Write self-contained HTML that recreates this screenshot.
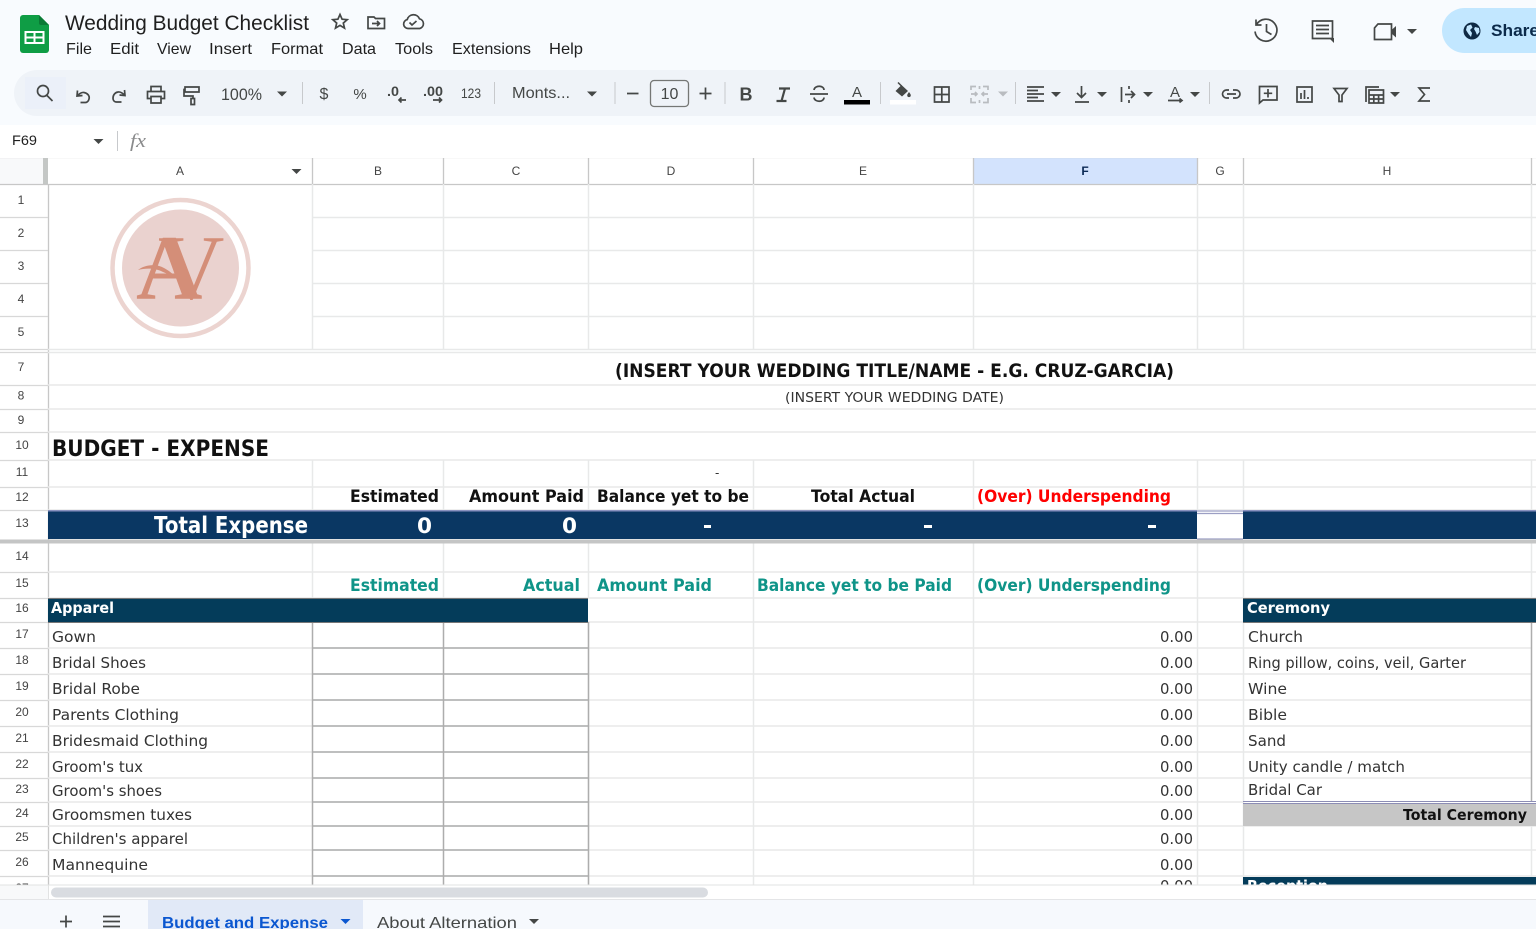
<!DOCTYPE html>
<html><head><meta charset="utf-8"><title>Wedding Budget Checklist</title>
<style>
html,body{margin:0;padding:0;width:1536px;height:929px;overflow:hidden;background:#fff}
svg{display:block}
.ui{font-family:"Liberation Sans",sans-serif;fill:#1f1f1f}
.m{font-family:"DejaVu Sans",sans-serif;font-size:15px;fill:#333}
.b{font-family:"DejaVu Sans",sans-serif;font-weight:bold;font-size:17px;fill:#111}
.h{font-family:"Liberation Sans",sans-serif;font-size:12px;fill:#444;text-anchor:middle}
.ic{fill:none;stroke:#444746;stroke-width:1.7}
.car{fill:#444746;stroke:none}
.sep{stroke:#c7c9cc;stroke-width:1}
.g{stroke:#e8e9e9;stroke-width:1.5}
.d{stroke:#adadad;stroke-width:1.5}
</style></head><body>
<svg width="1536" height="929" viewBox="0 0 1536 929" xmlns="http://www.w3.org/2000/svg">
<defs><clipPath id="gc"><rect x="0" y="158" width="1536" height="727"/></clipPath></defs>
<rect width="1536" height="125" fill="#f8fbfe"/>
<rect x="14" y="70" width="1560" height="46" rx="23" fill="#eff3f8"/>
<rect x="25" y="77" width="41" height="32" fill="#ebf0f9"/>

<!-- Logo -->
<path d="M20 18a3 3 0 0 1 3-3h16l10 10v25a3 3 0 0 1-3 3H23a3 3 0 0 1-3-3z" fill="#0f9d45"/>
<path d="M39 15l10 10H41a2 2 0 0 1-2-2z" fill="#0a7a35"/>
<path d="M25.500 32h18v11h-18zM25.500 37.500h18M34.500 32v11" fill="none" stroke="#fff" stroke-width="2"/>

<text class="ui" x="65" y="30" font-size="21" textLength="244" lengthAdjust="spacingAndGlyphs">Wedding Budget Checklist</text>
<path class="ic" stroke-width="1.500" d="M340 14.500l2.100 4.700 5.100.5-3.900 3.400 1.200 5-4.500-2.700-4.500 2.700 1.200-5-3.900-3.400 5.100-.5z"/>
<path class="ic" d="M368 17h6l1.500 1.500h9v10h-16.500zM372 23.500h7M377 21l2.500 2.500-2.500 2.500"/>
<path class="ic" stroke-width="1.200" d="M408 28.500a4.500 4.500 0 0 1-.8-8.900 6.500 6.500 0 0 1 12.300-.8 5 5 0 0 1 .3 9.700zM409.500 22.500l2.500 2.500 4.500-4"/>
<g class="ui" font-size="16">
<text x="66" y="54" textLength="26" lengthAdjust="spacingAndGlyphs">File</text>
<text x="110" y="54" textLength="29" lengthAdjust="spacingAndGlyphs">Edit</text>
<text x="157" y="54" textLength="34" lengthAdjust="spacingAndGlyphs">View</text>
<text x="209" y="54" textLength="43" lengthAdjust="spacingAndGlyphs">Insert</text>
<text x="271" y="54" textLength="52" lengthAdjust="spacingAndGlyphs">Format</text>
<text x="342" y="54" textLength="34" lengthAdjust="spacingAndGlyphs">Data</text>
<text x="395" y="54" textLength="38" lengthAdjust="spacingAndGlyphs">Tools</text>
<text x="452" y="54" textLength="79" lengthAdjust="spacingAndGlyphs">Extensions</text>
<text x="549" y="54" textLength="34" lengthAdjust="spacingAndGlyphs">Help</text>
</g>

<!-- top right -->
<path class="ic" stroke-width="2.400" d="M1256.500 24.500a11 11 0 1 1-1.500 7M1256 19.500v5.500h5.500M1266.500 24v7.500l5 3"/>
<path class="ic" stroke-width="2.500" d="M1312.500 21h20v17.500h-20zM1316 25.500h13M1316 29.500h13M1316 33.500h13"/>
<path d="M1329 38l5 5V38z" fill="#444746"/>
<path class="ic" stroke-width="2.300" d="M1378 24h13.500v15.500h-17v-11.500z"/>
<path d="M1391.500 30l4.500-4v11.500l-4.500-4z" fill="#444746"/>
<path class="car" d="M1407 29h10l-5 5z"/>
<rect x="1442" y="8" width="150" height="45" rx="22.500" fill="#c2e7ff"/>
<circle cx="1472" cy="31" r="8.500" fill="#0f2a44"/>
<path d="M1467 26l4-1.500 1.500 3-2.500 2.500 2 3-1 4-2.500-3-2.500-4zM1475 27l4 1 .5 4-2.500 3-1.500-3.500-1.500-2.500z" fill="#c2e7ff"/>
<text class="ui" x="1491" y="36" font-size="17" font-weight="bold" style="fill:#0b2a4a" textLength="48" lengthAdjust="spacingAndGlyphs">Share</text>

<!-- toolbar left -->
<circle class="ic" cx="43" cy="91" r="5.500" stroke-width="2"/><path class="ic" stroke-width="2.200" d="M47 95.500l5.500 5.500"/>
<path class="ic" d="M77.500 90.500l-.5 5.500 5.500-.5M77.500 95.500c2-2 4-3.500 6.500-3 3 .5 6 3 5 6.500-.5 2-2 3.500-3.500 3.500h-5"/>
<path class="ic" d="M124.500 90l.5 5.500-5.500-.5M124.500 95c-2-2-4-3.500-6.500-3-3 .5-5 3-5 6s2 4 3.500 4h5"/>
<path class="ic" stroke-width="2" d="M151 92v-5.500h10v5.500M151 98.500h-3.500v-7h17v7H161M151 96.500h10v6.500h-10z"/>
<path class="ic" stroke-width="2" d="M185 87h14v5h-14zM185 89.500h-1v6.500h9v2.500M191 98.500h3.500v6h-3.500z"/>
<text class="ui" x="221" y="100" font-size="17" style="fill:#444746" textLength="41" lengthAdjust="spacingAndGlyphs">100%</text>
<path class="car" d="M277 91.500h10l-5 5z"/>
<path class="sep" d="M302.500 82v22M494.500 82v22M615 82v22M725 82v22M880.500 82v22M1015.500 82v22M1209.500 82v22"/>
<text class="ui" x="324" y="99" font-size="16" text-anchor="middle" style="fill:#444746">$</text>
<text class="ui" x="360" y="99" font-size="15" text-anchor="middle" style="fill:#444746">%</text>
<text class="ui" x="387" y="96" font-size="14" font-weight="bold" style="fill:#444746" textLength="12" lengthAdjust="spacingAndGlyphs">.0</text>
<path class="ic" d="M406 100h-7M401.500 97.500l-2.500 2.500 2.500 2.500"/>
<text class="ui" x="423" y="96" font-size="14" font-weight="bold" style="fill:#444746" textLength="20" lengthAdjust="spacingAndGlyphs">.00</text>
<path class="ic" d="M433 100h8M439 97.500l2.500 2.500-2.500 2.500"/>
<text class="ui" x="461" y="98" font-size="14" style="fill:#444746" textLength="20" lengthAdjust="spacingAndGlyphs">123</text>
<text class="ui" x="512" y="98" font-size="16" style="fill:#444746" textLength="58" lengthAdjust="spacingAndGlyphs">Monts...</text>
<path class="car" d="M587 91.500h10l-5 5z"/>
<path class="ic" stroke-width="2" d="M627 93.500h11.500M699.500 93.500h12M705.500 87.500v12"/>
<rect x="650.500" y="80.500" width="38" height="26" rx="3.500" fill="none" stroke="#757775" stroke-width="1.300"/>
<text class="ui" x="669.500" y="99" font-size="16" text-anchor="middle" style="fill:#444746">10</text>
<text class="ui" x="746" y="100.500" font-size="18" font-weight="bold" text-anchor="middle" style="fill:#444746">B</text>
<path fill="none" stroke="#444746" stroke-width="2.200" d="M779 88.500h11M776.500 101h10M785 88.500l-3.500 12.500"/>
<path class="ic" d="M810 94h18M814 90c.5-5 10-5 10 0M814 97.500c.5 5 10 5 10 0"/>
<text class="ui" x="857" y="97" font-size="15" text-anchor="middle" style="fill:#444746">A</text>
<rect x="844" y="100" width="26" height="4.500" fill="#000"/>
<path d="M901.500 85l6.500 6-6 5.500-6.500-5.500z M909 92c.8 1.300 1.800 2.300 1.800 3.300a1.800 1.800 0 0 1-3.600 0c0-1 1-2 1.800-3.300z" fill="#444746"/>
<path d="M898 82.500l3.500 3.500" stroke="#444746" stroke-width="1.500"/>
<rect x="890" y="100" width="26" height="4.500" fill="#fff"/>
<path class="ic" stroke-width="1.900" d="M934.500 87h14.500v15h-14.500zM941.800 87v15M934.500 94.500h14.500"/>
<path fill="none" stroke="#b9bcc0" stroke-width="1.700" d="M971 90v-3.500h5M971 98v4.500h5M988 90v-3.500h-5M988 98v4.500h-5M971 94h6M975 92l2 2-2 2M988 94h-6M984 92l-2 2 2 2M979.500 86v3M979.500 100v3"/>
<path d="M998 91.500h10l-5 5z" fill="#b9bcc0"/>
<!-- toolbar right -->
<path class="ic" stroke-width="1.600" d="M1027 87h17M1027 90.500h11M1027 94h17M1027 97.500h11M1027 101h17"/>
<path class="car" d="M1051 92h10l-5 5z"/>
<path class="ic" stroke-width="1.900" d="M1081.500 86v11M1077 93l4.500 4.500 4.500-4.500M1075 102h14"/>
<path class="car" d="M1097 92h10l-5 5z"/>
<path class="ic" stroke-width="1.800" d="M1121.500 87v15M1125 94.500h9.500M1131 91l3.500 3.500-3.500 3.500M1129 86v3M1129 100v3"/>
<path class="car" d="M1143 92h10l-5 5z"/>
<text class="ui" x="1175" y="97" font-size="15" text-anchor="middle" style="fill:#444746">A</text>
<path class="ic" stroke-width="1.500" d="M1168 100.500h14M1179.500 98.500l2.500 2-2.500 2"/>
<path class="car" d="M1190 92h10l-5 5z"/>
<path class="ic" stroke-width="1.900" d="M1229 90h-2.500a4 4 0 0 0 0 8h2.500M1233 90h3a4 4 0 0 1 0 8H1233M1227 94h9"/>
<path class="ic" stroke-width="1.900" d="M1259.500 86.500h17.500v13.500h-14l-3.500 3zM1268 89v8.500M1263.800 93.300h8.400"/>
<path class="ic" stroke-width="1.700" d="M1297 87h15v15h-15zM1301 93v6M1304.500 90v9M1308 97v2"/>
<path class="ic" stroke-width="2" d="M1334 88.500h13l-5 6.500v6.500h-3V95z"/>
<path class="ic" stroke-width="1.800" d="M1366 102v-15h13M1369 90h14.500v13H1369zM1369 95h14.500M1369 99h14.500M1373.800 95v8M1378.600 95v8"/>
<path class="car" d="M1390 92h10l-5 5z"/>
<path class="ic" stroke-width="2.400" d="M1430 88h-11l5.500 6.500-5.500 6.500h11"/>

<!-- formula bar -->
<text class="ui" x="12" y="145" font-size="14" textLength="25" lengthAdjust="spacingAndGlyphs">F69</text>
<path class="car" d="M93.500 139h10l-5 5z"/>
<path class="sep" d="M117.500 131v20" stroke="#d8d8d8"/>
<text x="130" y="147" font-size="19" font-style="italic" font-family="Liberation Serif,serif" fill="#8a8b8c" textLength="16" lengthAdjust="spacingAndGlyphs">fx</text>

<!-- sheet -->
<g clip-path="url(#gc)">
<rect x="0" y="158" width="1536" height="26" fill="#fff"/>
<rect x="0" y="158" width="44" height="26" fill="#f8f9fa"/>
<rect x="43" y="158" width="5" height="26" fill="#c4c7c5"/>
<rect x="973" y="158" width="224" height="26" fill="#d3e3fd"/>
<path stroke="#c7c7c7" stroke-width="1.300" d="M0 157.500H1536M0 184.500H1536M312.500 158v26M443.500 158v26M588.500 158v26M753.500 158v26M973.500 158v26M1197.500 158v26M1243.500 158v26M1531.500 158v26M48.500 184V885"/>
<!-- rows in header -->
<path stroke="#d8d8d8" stroke-width="1.200" d="M0 217.500h48M0 250.500h48M0 283.500h48M0 316.500h48M0 349.500h48M0 352.500h48M0 385.500h48M0 409.500h48M0 432.500h48M0 460.500h48M0 487.500h48M0 510.500h48M0 572.500h48M0 598.500h48M0 622.500h48M0 648.500h48M0 674.500h48M0 700.500h48M0 726.500h48M0 752.500h48M0 778.500h48M0 802.500h48M0 826.500h48M0 850.500h48M0 876.500h48"/>
<!-- grid -->
<path class="g" d="M312 217.500H1536M312 250.500H1536M312 283.500H1536M312 316.500H1536M48 349.500H1536M48 352.500H1536M48 385H1536M48 409H1536M48 432H1536M48 460H1536M48 487H1536M48 510H1536M48 572H1536M48 598H1536M588 622H1243M48 648H1531M48 674H1531M48 700H1531M48 726H1531M48 752H1531M48 778H1531M48 802H1243M48 826H1536M48 850H1536M48 876H1536"/>
<path class="g" d="M312.500 184V349M443.500 184V349M588.500 184V349M753.500 184V349M973.500 184V349M1197.500 184V349M1243.500 184V349M1531.500 184V349M312.500 460V510M443.500 460V510M588.500 460V510M753.500 460V510M973.500 460V510M1197.500 460V510M1243.500 460V510M1531.500 460V510M312.500 543V598M443.500 543V598M588.500 543V598M753.500 543V598M973.500 543V598M1197.500 543V598M1243.500 543V598M1531.500 543V598M753.500 598V885M973.500 598V885M1197.500 598V885M1243.500 598V885M588.500 622V885M1531.500 826V885"/>
<path class="d" d="M312 648H588M312 674H588M312 700H588M312 726H588M312 752H588M312 778H588M312 802H588M312 826H588M312 850H588M312 876H588M312.500 622V885M443.500 622V885M588.500 622V885M1531.500 622V802"/>
<!-- row 13 band -->
<rect x="48" y="510" width="1149" height="29" fill="#0a3763"/>
<rect x="1243" y="510" width="293" height="29" fill="#0a3763"/>
<rect x="48" y="510" width="1488" height="1.500" fill="#8a92c0"/>
<rect x="1197" y="510" width="46" height="29" fill="#fff"/>
<path stroke="#9c9fc4" stroke-width="1.200" d="M1197 511h46M1197 513.500h46M1197 539h46"/>
<rect x="0" y="539.500" width="1536" height="4" fill="#c4c5c5"/>
<!-- row 16 -->
<rect x="48" y="598" width="540" height="24" fill="#043c5a"/>
<rect x="1243" y="598" width="293" height="24" fill="#043c5a"/>
<path stroke="#777" d="M48 598.500h540M1243 598.500h293M48 622.500h540M1243 622.500h293"/>
<!-- total ceremony -->
<rect x="1243" y="803" width="293" height="23" fill="#c6c6c6"/>
<path stroke="#8c8db5" stroke-width="1" d="M1243 801.500h293M1243 803.500h293"/>
<rect x="1243" y="877" width="293" height="10" fill="#043c5a"/>

<!-- column letters -->
<text class="h" x="180" y="175">A</text><path class="car" d="M291.500 169h10l-5 5z"/>
<text class="h" x="378" y="175">B</text><text class="h" x="516" y="175">C</text><text class="h" x="671" y="175">D</text><text class="h" x="863" y="175">E</text><text class="h" x="1085" y="175" style="font-weight:bold;fill:#0b2a55">F</text><text class="h" x="1220" y="175">G</text><text class="h" x="1387" y="175">H</text>
<!-- row numbers -->
<text class="h" x="21" y="204">1</text><text class="h" x="21" y="237">2</text><text class="h" x="21" y="270">3</text><text class="h" x="21" y="303">4</text><text class="h" x="21" y="336">5</text><text class="h" x="21" y="371">7</text><text class="h" x="21" y="399.500">8</text><text class="h" x="21" y="424">9</text><text class="h" x="22" y="449">10</text><text class="h" x="22" y="476">11</text><text class="h" x="22" y="501">12</text><text class="h" x="22" y="527">13</text><text class="h" x="22" y="560">14</text><text class="h" x="22" y="587">15</text><text class="h" x="22" y="612">16</text><text class="h" x="22" y="638">17</text><text class="h" x="22" y="664">18</text><text class="h" x="22" y="690">19</text><text class="h" x="22" y="716">20</text><text class="h" x="22" y="742">21</text><text class="h" x="22" y="768">22</text><text class="h" x="22" y="793">23</text><text class="h" x="22" y="817">24</text><text class="h" x="22" y="841">25</text><text class="h" x="22" y="866">26</text><text class="h" x="22" y="892">27</text>

<!-- logo image -->
<circle cx="180.500" cy="268" r="68" fill="none" stroke="#ecd4d0" stroke-width="4.500"/>
<circle cx="180.500" cy="268" r="58.500" fill="#ead2cf"/>
<text x="136" y="298.500" font-family="Liberation Serif,serif" font-weight="bold" font-size="92" fill="#d48e78">A</text>
<text x="158" y="298.500" font-family="Liberation Serif,serif" font-size="92" fill="#d48e78">V</text>
<path d="M138 270c6-5 18-7 26-2 4 2 9 6 12 9-5-1-8-3-13-5-8-4-17-4-25-2z" fill="#d48e78"/>

<!-- titles -->
<text class="b" x="615" y="377" style="font-size:19px" textLength="559" lengthAdjust="spacingAndGlyphs">(INSERT YOUR WEDDING TITLE/NAME - E.G. CRUZ-GARCIA)</text>
<text class="m" x="785" y="402" style="font-size:13px" textLength="219" lengthAdjust="spacingAndGlyphs">(INSERT YOUR WEDDING DATE)</text>
<text class="b" x="52" y="456" style="font-size:22px" textLength="217" lengthAdjust="spacingAndGlyphs">BUDGET - EXPENSE</text>
<text class="m" x="715" y="477" style="font-size:12px">-</text>
<g>
<text class="b" x="350" y="502" textLength="89" lengthAdjust="spacingAndGlyphs">Estimated</text>
<text class="b" x="469" y="502" textLength="115" lengthAdjust="spacingAndGlyphs">Amount Paid</text>
<text class="b" x="597" y="502" textLength="152" lengthAdjust="spacingAndGlyphs">Balance yet to be</text>
<text class="b" x="811" y="502" textLength="104" lengthAdjust="spacingAndGlyphs">Total Actual</text>
<text class="b" x="977" y="502" style="fill:#ff0000" textLength="194" lengthAdjust="spacingAndGlyphs">(Over) Underspending</text>
</g>
<g>
<text class="b" x="154" y="533" style="font-size:23px;fill:#fff" textLength="154" lengthAdjust="spacingAndGlyphs">Total Expense</text>
<text class="b" x="417" y="533" style="font-size:21px;fill:#fff" textLength="15" lengthAdjust="spacingAndGlyphs">0</text>
<text class="b" x="562" y="533" style="font-size:21px;fill:#fff" textLength="15" lengthAdjust="spacingAndGlyphs">0</text>
<rect x="704" y="525" width="7" height="3" fill="#fff"/><rect x="924" y="525" width="8" height="3" fill="#fff"/><rect x="1148" y="525" width="8" height="3" fill="#fff"/>
</g>
<g>
<text class="b" x="350" y="591" style="fill:#0f9488" textLength="89" lengthAdjust="spacingAndGlyphs">Estimated</text>
<text class="b" x="523" y="591" style="fill:#0f9488" textLength="57" lengthAdjust="spacingAndGlyphs">Actual</text>
<text class="b" x="597" y="591" style="fill:#0f9488" textLength="115" lengthAdjust="spacingAndGlyphs">Amount Paid</text>
<text class="b" x="757" y="591" style="fill:#0f9488" textLength="195" lengthAdjust="spacingAndGlyphs">Balance yet to be Paid</text>
<text class="b" x="977" y="591" style="fill:#0f9488" textLength="194" lengthAdjust="spacingAndGlyphs">(Over) Underspending</text>
</g>
<text class="b" x="51" y="613" style="font-size:15.500px;fill:#fff" textLength="63" lengthAdjust="spacingAndGlyphs">Apparel</text>
<text class="b" x="1247" y="613" style="font-size:15.500px;fill:#fff" textLength="83" lengthAdjust="spacingAndGlyphs">Ceremony</text>
<!-- col A -->
<text class="m" x="52" y="642" textLength="44" lengthAdjust="spacingAndGlyphs">Gown</text>
<text class="m" x="52" y="668" textLength="94" lengthAdjust="spacingAndGlyphs">Bridal Shoes</text>
<text class="m" x="52" y="694" textLength="88" lengthAdjust="spacingAndGlyphs">Bridal Robe</text>
<text class="m" x="52" y="720" textLength="127" lengthAdjust="spacingAndGlyphs">Parents Clothing</text>
<text class="m" x="52" y="746" textLength="156" lengthAdjust="spacingAndGlyphs">Bridesmaid Clothing</text>
<text class="m" x="52" y="772" textLength="91" lengthAdjust="spacingAndGlyphs">Groom's tux</text>
<text class="m" x="52" y="796" textLength="110" lengthAdjust="spacingAndGlyphs">Groom's shoes</text>
<text class="m" x="52" y="820" textLength="140" lengthAdjust="spacingAndGlyphs">Groomsmen tuxes</text>
<text class="m" x="52" y="844" textLength="136" lengthAdjust="spacingAndGlyphs">Children's apparel</text>
<text class="m" x="52" y="870" textLength="96" lengthAdjust="spacingAndGlyphs">Mannequine</text>
<!-- col F -->
<text class="m" x="1160" y="642" textLength="33" lengthAdjust="spacingAndGlyphs">0.00</text>
<text class="m" x="1160" y="668" textLength="33" lengthAdjust="spacingAndGlyphs">0.00</text>
<text class="m" x="1160" y="694" textLength="33" lengthAdjust="spacingAndGlyphs">0.00</text>
<text class="m" x="1160" y="720" textLength="33" lengthAdjust="spacingAndGlyphs">0.00</text>
<text class="m" x="1160" y="746" textLength="33" lengthAdjust="spacingAndGlyphs">0.00</text>
<text class="m" x="1160" y="772" textLength="33" lengthAdjust="spacingAndGlyphs">0.00</text>
<text class="m" x="1160" y="796" textLength="33" lengthAdjust="spacingAndGlyphs">0.00</text>
<text class="m" x="1160" y="820" textLength="33" lengthAdjust="spacingAndGlyphs">0.00</text>
<text class="m" x="1160" y="844" textLength="33" lengthAdjust="spacingAndGlyphs">0.00</text>
<text class="m" x="1160" y="870" textLength="33" lengthAdjust="spacingAndGlyphs">0.00</text>
<text class="m" x="1160" y="891" textLength="33" lengthAdjust="spacingAndGlyphs">0.00</text>
<!-- col H -->
<text class="m" x="1248" y="642" textLength="55" lengthAdjust="spacingAndGlyphs">Church</text>
<text class="m" x="1248" y="668" textLength="218" lengthAdjust="spacingAndGlyphs">Ring pillow, coins, veil, Garter</text>
<text class="m" x="1248" y="694" textLength="39" lengthAdjust="spacingAndGlyphs">Wine</text>
<text class="m" x="1248" y="720" textLength="39" lengthAdjust="spacingAndGlyphs">Bible</text>
<text class="m" x="1248" y="746" textLength="38" lengthAdjust="spacingAndGlyphs">Sand</text>
<text class="m" x="1248" y="772" textLength="157" lengthAdjust="spacingAndGlyphs">Unity candle / match</text>
<text class="m" x="1248" y="795" textLength="74" lengthAdjust="spacingAndGlyphs">Bridal Car</text>
<text class="b" x="1403" y="820" style="font-size:15.500px" textLength="124" lengthAdjust="spacingAndGlyphs">Total Ceremony</text>
<text class="b" x="1247" y="891" style="font-size:15px;fill:#fff" textLength="81" lengthAdjust="spacingAndGlyphs">Reception</text>
</g>

<!-- bottom -->
<rect x="0" y="885" width="1536" height="14" fill="#fff"/>
<rect x="0" y="885" width="48" height="14" fill="#f8f9fa"/>
<path stroke="#e2e3e3" d="M0 885h1536M48.500 885v14"/>
<rect x="51" y="887.500" width="657" height="10" rx="5" fill="#d9dce1"/>
<rect x="0" y="899" width="1536" height="30" fill="#f6f9fd"/>
<path stroke="#e4e5e7" d="M0 899.500h1536"/>
<rect x="148" y="900" width="215" height="29" fill="#e1e9f7"/>
<path class="ic" stroke-width="1.800" d="M60 921.500h12M66 915.500v12M103 916.500h17M103 921.500h17M103 926.500h17"/>
<text class="ui" x="162" y="928" font-size="16" font-weight="bold" style="fill:#0b57d0" textLength="166" lengthAdjust="spacingAndGlyphs">Budget and Expense</text>
<path d="M340.500 919h10l-5 5z" fill="#0b57d0"/>
<text class="ui" x="377" y="928" font-size="16" style="fill:#444746" textLength="140" lengthAdjust="spacingAndGlyphs">About Alternation</text>
<path class="car" d="M529 919h10l-5 5z"/>
</svg>
</body></html>
